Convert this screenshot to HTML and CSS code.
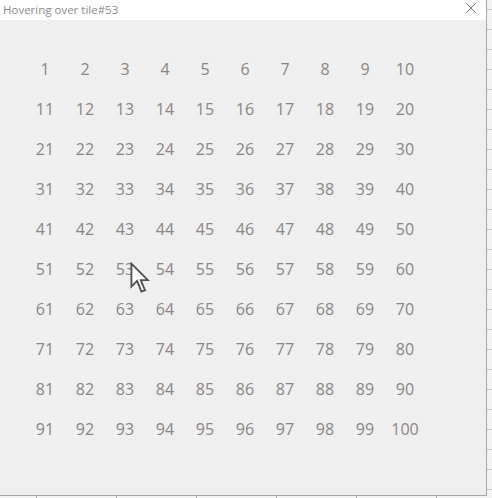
FILE: index.html
```html
<!DOCTYPE html>
<html>
    <head>
        <title>Tiles</title>
        <link rel="stylesheet" href="styles.css">
    </head>
    <body>
        <div class="window">
            <div class="titlebar">
                <span class="title">Hovering over tile#53</span>
                <svg class="close" width="12" height="12" viewBox="0 0 12 12">
                    <path d="M1 1 L11 11 M11 1 L1 11" stroke="#7a7a86" stroke-width="1" fill="none"/>
                </svg>
            </div>
            <div class="tiles"></div>
        </div>
        <svg class="cursor" width="20" height="32" viewBox="0 0 14 22">
            <path d="M1 1 L1 17 L5 13 L8 20.5 L10.5 19.5 L7.5 12.5 L12.5 12.5 Z" fill="#fff" stroke="#505050" stroke-width="1.3" stroke-linejoin="miter"/>
        </svg>

        <script>
            var tiles = document.querySelector('.tiles');
            for (var i = 1; i <= 100; i++) {
                var t = document.createElement('div');
                t.className = 'tile';
                t.textContent = i;
                tiles.appendChild(t);
            }
        </script>
    </body>
</html>
```

FILE: styles.css
```css
html, body {
    margin: 0;
    padding: 0;
}
body {
    width: 492px;
    height: 498px;
    overflow: hidden;
    position: relative;
    background-color: #f3f3f3;
    background-image:
        repeating-linear-gradient(to bottom, transparent 0, transparent 9px, #c8c8c8 9px, #c8c8c8 10px, transparent 10px, transparent 20px),
        repeating-linear-gradient(to right, transparent 0, transparent 36px, #a8a8b0 36px, #a8a8b0 37px, transparent 37px, transparent 80px);
    font-family: "Open Sans", "DejaVu Sans", sans-serif;
}
.window {
    width: 487px;
    height: 496px;
    background: #efefef;
    border-right: 1px solid #a6a6a6;
    border-bottom: 1px solid #a6a6a6;
    box-sizing: border-box;
}
.titlebar {
    height: 20px;
    background: #fff;
    display: flex;
    align-items: center;
    justify-content: space-between;
    padding: 0 9px 0 3px;
}
.title {
    font-size: 11.5px;
    color: #8a8a8a;
    margin-top: -2px;
}
.close {
    margin-top: -4px;
}
.tiles {
    display: grid;
    grid-template-columns: repeat(10, 40px);
    grid-auto-rows: 40px;
    padding: 29px 0 0 25px;
}
.tile {
    display: flex;
    align-items: center;
    justify-content: center;
    font-size: 16px;
    color: #898684;
}
.cursor {
    position: absolute;
    left: 130px;
    top: 262px;
}
```
